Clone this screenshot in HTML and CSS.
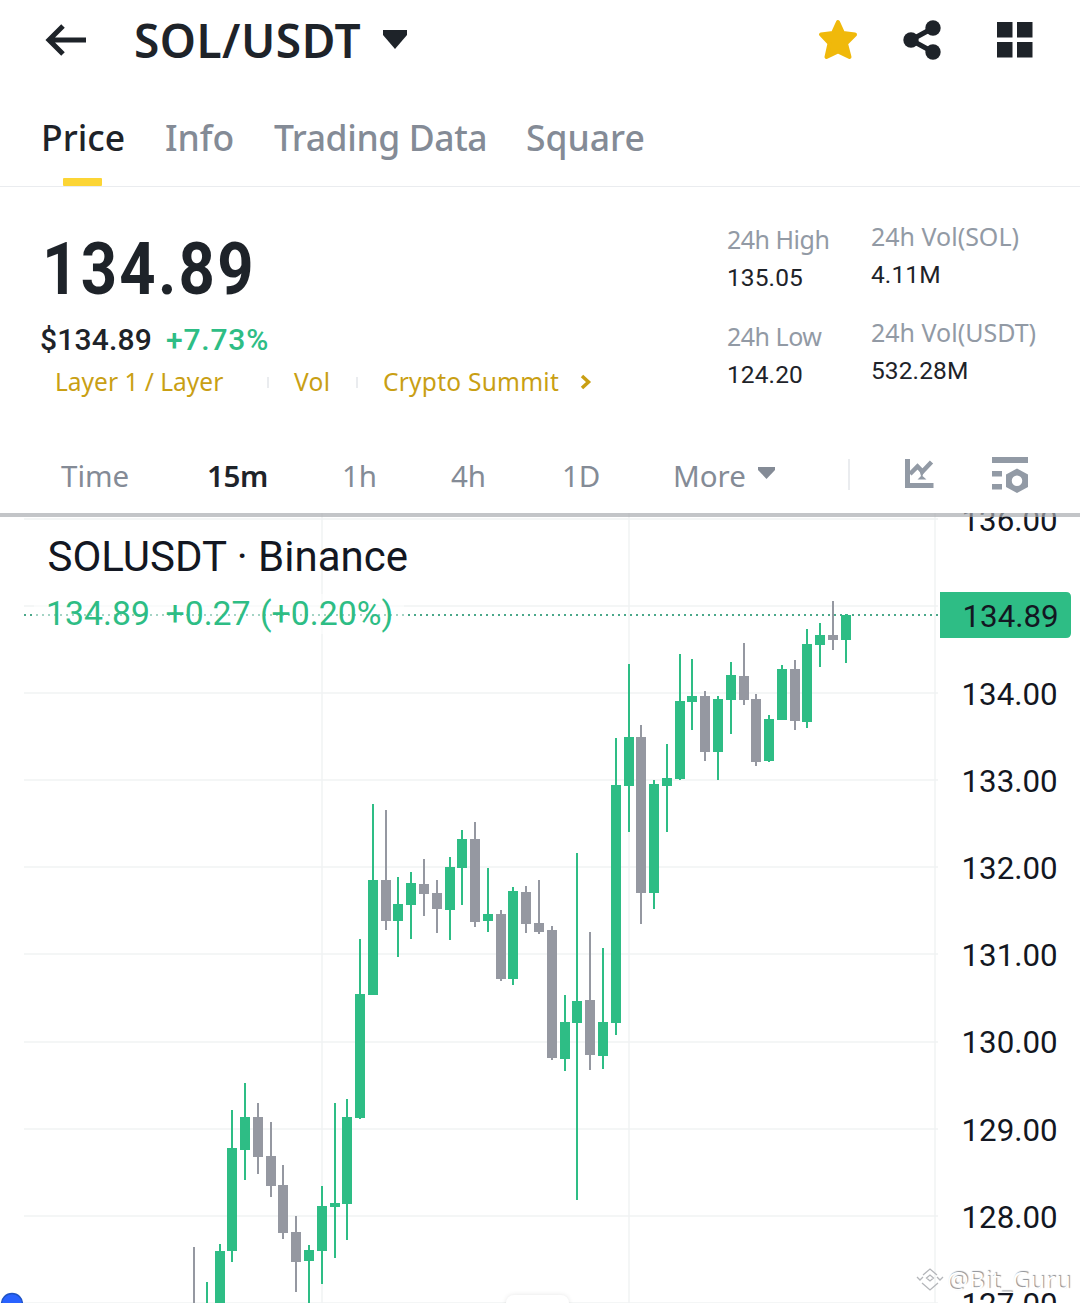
FILE: index.html
```html
<!DOCTYPE html>
<html lang="en">

<head>
    <meta charset="UTF-8">
    <meta name="viewport" content="width=device-width, initial-scale=1.0">
    <title>SOL/USDT</title>
    <link rel="stylesheet" href="styles.css">
</head>

<body>
    <header class="header">
        <svg class="back" width="42" height="34" viewBox="0 0 42 34">
            <path d="M18 3L4 17L18 31M4 17H41" fill="none" stroke="#1e2329" stroke-width="5" />
        </svg>
        <h1 class="pair">SOL/USDT</h1>
        <svg class="caret" width="24" height="19" viewBox="0 0 24 19">
            <path d="M0 0H24V5L12 19L0 5Z" fill="#1e2329" />
        </svg>
        <div class="actions">
            <svg width="40" height="42" viewBox="0 0 40 42">
                <path d="M20 3L25 14L37 15.500L28 24.500L31.500 38L20 32.500L8.500 38L11.500 24.500L3 15.500L15 14Z" fill="#f0b90b" stroke="#f0b90b" stroke-width="4" stroke-linejoin="round" />
            </svg>
            <svg width="40" height="42" viewBox="0 0 40 42">
                <path d="M31 9L9 21L31 33" fill="none" stroke="#1e2329" stroke-width="5" />
                <circle cx="31" cy="9" r="7.700" fill="#1e2329" />
                <circle cx="9" cy="21" r="7.700" fill="#1e2329" />
                <circle cx="31" cy="33" r="7.700" fill="#1e2329" />
            </svg>
            <svg width="36" height="36" viewBox="0 0 36 36">
                <path d="M0 0H15.500V15.500H0ZM20 0H35.500V15.500H20ZM0 20H15.500V35.500H0ZM20 20H35.500V35.500H20Z" fill="#1e2329" />
            </svg>
        </div>
    </header>

    <nav class="tabs">
        <span class="tab active">Price</span>
        <span class="tab">Info</span>
        <span class="tab data">Trading Data</span>
        <span class="tab">Square</span>
    </nav>

    <section class="summary">
        <div class="quote">
            <div class="price">134.89</div>
            <div class="change"><span class="usd">$134.89</span><span class="up">+7.73%</span></div>
            <div class="tags">
                <span class="tag layer">Layer 1 / Layer</span>
                <i class="sep"></i>
                <span class="tag vol">Vol</span>
                <i class="sep"></i>
                <span class="tag summit">Crypto Summit</span>
                <svg width="12" height="16" viewBox="0 0 12 16">
                    <path d="M2 2L8.500 8L2 14" fill="none" stroke="#c99f14" stroke-width="3.500" />
                </svg>
            </div>
        </div>
        <dl class="stats range">
            <div class="stat">
                <dt>24h High</dt>
                <dd>135.05</dd>
            </div>
            <div class="stat">
                <dt>24h Low</dt>
                <dd>124.20</dd>
            </div>
        </dl>
        <dl class="stats volume">
            <div class="stat">
                <dt>24h Vol(SOL)</dt>
                <dd>4.11M</dd>
            </div>
            <div class="stat">
                <dt>24h Vol(USDT)</dt>
                <dd>532.28M</dd>
            </div>
        </dl>
    </section>

    <div class="intervals">
        <span>Time</span>
        <span class="active">15m</span>
        <span>1h</span>
        <span>4h</span>
        <span>1D</span>
        <span class="more">More
            <svg width="17" height="12" viewBox="0 0 17 12">
                <path d="M0 0H17V3L8.500 12L0 3Z" fill="#848b96" />
            </svg>
        </span>
        <i class="divider"></i>
        <svg class="indicator" width="29" height="30" viewBox="0 0 29 30">
            <path d="M2.500 0V26.500H28.500" fill="none" stroke="#929aa5" stroke-width="5" />
            <path d="M5 15L12.500 7.500L17.500 12.500L26.500 3" fill="none" stroke="#929aa5" stroke-width="4.500" />
            <path d="M14.500 12H19L17.500 17L21.500 20.500H12.500L16 17Z" fill="#929aa5" />
        </svg>
        <svg class="settings" width="36" height="36" viewBox="0 0 36 36">
            <path d="M0 0H36V6H0ZM0 14H10V19.500H0ZM0 27H10V32.500H0Z" fill="#929aa5" />
            <path fill-rule="evenodd" d="M25 11.500L36 17.500V30L25 36L14 30V17.500ZM25 18.500A5.200 5.200 0 1 0 25 29A5.200 5.200 0 1 0 25 18.500Z" fill="#929aa5" />
        </svg>
    </div>

    <main class="chart">
        <svg width="1080" height="790" viewBox="0 513 1080 790">
            <path class="grid" d="M24 519H938M24 606H938M24 693H938M24 780H938M24 867H938M24 954H938M24 1042H938M24 1129H938M24 1216H938M24 1303H938M322 513V1303M629 513V1303M935 513V1303" />

            <path class="last-price" d="M24 615H940" />

            <!-- rising candles: wicks, then bodies -->
            <path class="up-wick" d="M207 1282V1303M220 1244V1303M232 1110V1262M245 1083V1180M309 1245V1303M322 1186V1284M335 1103V1258M347 1099V1240M360 939V1119M373 804V995M398 877V957M411 872V939M450 857V940M462 830V905M488 868V932M513 887V985M565 995V1071M577 853V1200M603 948V1069M616 738V1035M629 664V832M654 780V909M667 744V832M680 654V780M692 659V730M718 696V780M731 662V734M769 715V762M782 665V720M807 629V728M820 623V667M846 614V663" />
            <path class="up-body" d="M220 1251V1303M232 1148V1251M245 1117V1150M309 1250V1261M322 1206V1251M335 1203V1207M347 1117V1204M360 994V1118M373 880V995M398 904V921M411 883V905M450 867V910M462 839V868M488 914V921M513 891V979M565 1022V1059M577 1001V1023M603 1022V1056M616 785V1023M629 737V786M654 784V893M667 778V786M680 701V779M692 696V702M718 699V752M731 675V700M769 719V761M782 669V720M807 644V722M820 635V645M846 615V640" />

            <!-- falling candles -->
            <path class="down-wick" d="M194 1247V1303M258 1103V1174M271 1122V1197M283 1165V1239M296 1216V1292M386 810V930M424 859V916M437 880V933M475 822V927M501 910V981M526 886V933M539 880V934M552 926V1060M590 932V1070M641 725V924M705 691V761M744 643V705M756 694V766M795 660V730M833 601V650" />
            <path class="down-body" d="M258 1117V1157M271 1156V1186M283 1185V1233M296 1232V1262M386 880V921M424 884V894M437 893V909M475 839V922M501 914V979M526 892V924M539 923V932M552 930V1058M590 1000V1055M641 737V893M705 696V752M744 676V700M756 699V762M795 669V721M833 635V640" />

            <text class="symbol" x="47.500" y="571">SOLUSDT · Binance</text>
            <rect class="legend-bg" x="34" y="594" width="370" height="40" />
            <g class="legend">
                <text x="46" y="625">134.89</text>
                <text x="165.500" y="625">+0.27</text>
                <text x="260" y="625">(+0.20%)</text>
            </g>

            <g class="axis">
                <text x="961.500" y="531">136.00</text>
                <text x="961.500" y="705">134.00</text>
                <text x="961.500" y="792">133.00</text>
                <text x="961.500" y="879">132.00</text>
                <text x="961.500" y="966">131.00</text>
                <text x="961.500" y="1053">130.00</text>
                <text x="961.500" y="1141">129.00</text>
                <text x="961.500" y="1228">128.00</text>
                <text x="961.500" y="1315">127.00</text>
                <path d="M940 592H1066Q1071 592 1071 597V633Q1071 638 1066 638H940Z" fill="#2ebd85" />
                <text x="962.500" y="627">134.89</text>
            </g>

            <path d="M0 515H1080" stroke="#a9acb0" stroke-opacity="0.7" stroke-width="4" />
            <circle cx="12" cy="1304" r="10.500" fill="#2962ff" stroke="#1e53c5" stroke-width="1.500" />
        </svg>
        <div class="handle"></div>
        <div class="watermark">
            <svg width="28" height="24" viewBox="0 0 28 24">
                <path d="M7 7L14 1L21 7M1 9L4 12L7 9M10.500 10L14 7L17.500 10L14 13ZM21 9L24 12L27 9M6 15L14 22L22 15" fill="none" stroke="#b4b6ba" stroke-width="1.300" />
            </svg>
            <span>@Bit_Guru</span>
        </div>
    </main>
</body>

</html>
```
FILE: styles.css
```css
* {
    box-sizing: border-box;
}

body {
    margin: 0;
    width: 1080px;
    height: 1303px;
    overflow: hidden;
    background: #fff;
    color: #1e2329;
    font-family: "Noto Sans", sans-serif;
}

svg {
    display: block;
    flex: none;
}

.header {
    display: flex;
    align-items: center;
    height: 79px;
    padding: 0 47px 0 45px;
}

.pair {
    margin: 0 0 0 47px;
    width: 249px;
    font-size: 46px;
    font-weight: 600;
    line-height: 78px;
    letter-spacing: 0.5px;
    white-space: nowrap;
}

.actions {
    display: flex;
    align-items: center;
    margin-left: auto;
}

.actions svg + svg {
    margin-left: 43.5px;
}

.actions svg:last-child {
    margin-left: 55.5px;
}

.tabs {
    display: grid;
    grid-template-columns: 124px 109px 252px 140px;
    height: 108px;
    padding: 28px 0 0 41px;
    border-bottom: 1px solid #eaecef;
    font-size: 35.5px;
    font-weight: 500;
    line-height: 60px;
    color: #848b96;
    white-space: nowrap;
}

.tab.active {
    position: relative;
    color: #1e2329;
}

.tab.active::after {
    content: "";
    position: absolute;
    left: 22px;
    bottom: 0;
    width: 39px;
    height: 8px;
    border-radius: 1px;
    background: #fcd535;
}

.tab.data {
    letter-spacing: -0.4px;
}

.summary {
    display: flex;
    height: 250px;
    white-space: nowrap;
}

.quote {
    width: 727px;
    padding: 43px 0 0 40px;
}

.price {
    width: 250px;
    margin-left: 2px;
    font-family: Roboto, sans-serif;
    font-size: 72px;
    font-weight: 700;
    line-height: 80px;
    letter-spacing: 2.6px;
    transform: scaleX(0.88);
    transform-origin: left;
}

.change {
    display: flex;
    gap: 14px;
    margin-top: 10px;
    font-family: Roboto, sans-serif;
    font-size: 30px;
    font-weight: 500;
    line-height: 40px;
    letter-spacing: 0.2px;
}

.up {
    color: #2ebd85;
    letter-spacing: 0.8px;
}

.tags {
    display: flex;
    align-items: center;
    margin-top: 2px;
    padding-left: 15px;
    font-size: 24.5px;
    line-height: 40px;
    color: #c99f14;
}

.layer {
    width: 212px;
}

.vol {
    width: 62px;
    letter-spacing: 0.3px;
}

.summit {
    width: 197px;
    letter-spacing: 0.25px;
}

.sep {
    width: 2px;
    height: 11px;
    margin-right: 25px;
    background: #eaecef;
}

.stats {
    display: flex;
    flex-direction: column;
    gap: 18.5px;
    margin: 0;
    font-size: 25px;
    line-height: 38px;
}

.range {
    width: 144px;
    padding-top: 33px;
}

.range dt {
    letter-spacing: -0.5px;
}

.volume {
    width: 180px;
    padding-top: 30px;
}

.stats dt {
    color: #929aa5;
}

.stats dd {
    margin: 0;
    padding-top: 1px;
    font-family: Roboto, sans-serif;
    font-size: 24.5px;
    letter-spacing: 0.1px;
}

.range dd {
    padding-top: 1px;
}

.range.stats {
    gap: 20px;
}

.intervals {
    display: grid;
    grid-template-columns: 146px 135px 109px 111px 111px 176px 56px 87px 36px;
    align-items: center;
    height: 76px;
    padding-left: 61px;
    font-size: 29.5px;
    color: #848b96;
    white-space: nowrap;
}

.intervals .active {
    font-weight: 600;
    letter-spacing: -0.4px;
    color: #1e2329;
}

.more {
    display: flex;
    align-items: center;
    gap: 12px;
}

.more svg {
    margin-bottom: 4px;
}

.divider {
    width: 2px;
    height: 31px;
    margin: 0 0 2px -1px;
    background: #eaecef;
}

.indicator {
    margin-bottom: 2px;
}

.chart {
    position: relative;
    height: 790px;
    overflow: hidden;
    font-family: Roboto, sans-serif;
}

.grid {
    stroke: #f1f3f4;
    stroke-width: 1.5;
}

.last-price {
    stroke: #4ba88a;
    stroke-width: 2;
    stroke-dasharray: 2 4;
}

.up-wick,
.down-wick {
    stroke-width: 2;
}

.up-body,
.down-body {
    stroke-width: 10;
}

.up-wick,
.up-body {
    stroke: #2ebd85;
}

.down-wick,
.down-body {
    stroke: #9598a1;
}

.symbol {
    font-size: 42px;
    fill: #131722;
}

.legend-bg {
    fill: #fff;
    fill-opacity: 0.5;
}

.legend {
    font-size: 33.8px;
    fill: #2ebd85;
}

.axis {
    font-size: 31.3px;
    fill: #131722;
}

/* pull-up handle of the panel below the chart */
.handle {
    position: absolute;
    left: 506px;
    bottom: -20px;
    width: 63px;
    height: 28px;
    border-radius: 8px;
    background: #fff;
    box-shadow: 0 0 5px rgba(0, 0, 0, 0.1);
}

.watermark {
    position: absolute;
    left: 916px;
    bottom: 6px;
    display: flex;
    align-items: center;
    gap: 3px;
    font-family: "Noto Sans", sans-serif;
    font-size: 24px;
    line-height: 34px;
    letter-spacing: 0.5px;
    color: #fff;
    text-shadow: 1px -1px 1px #8b8e94;
}
```
